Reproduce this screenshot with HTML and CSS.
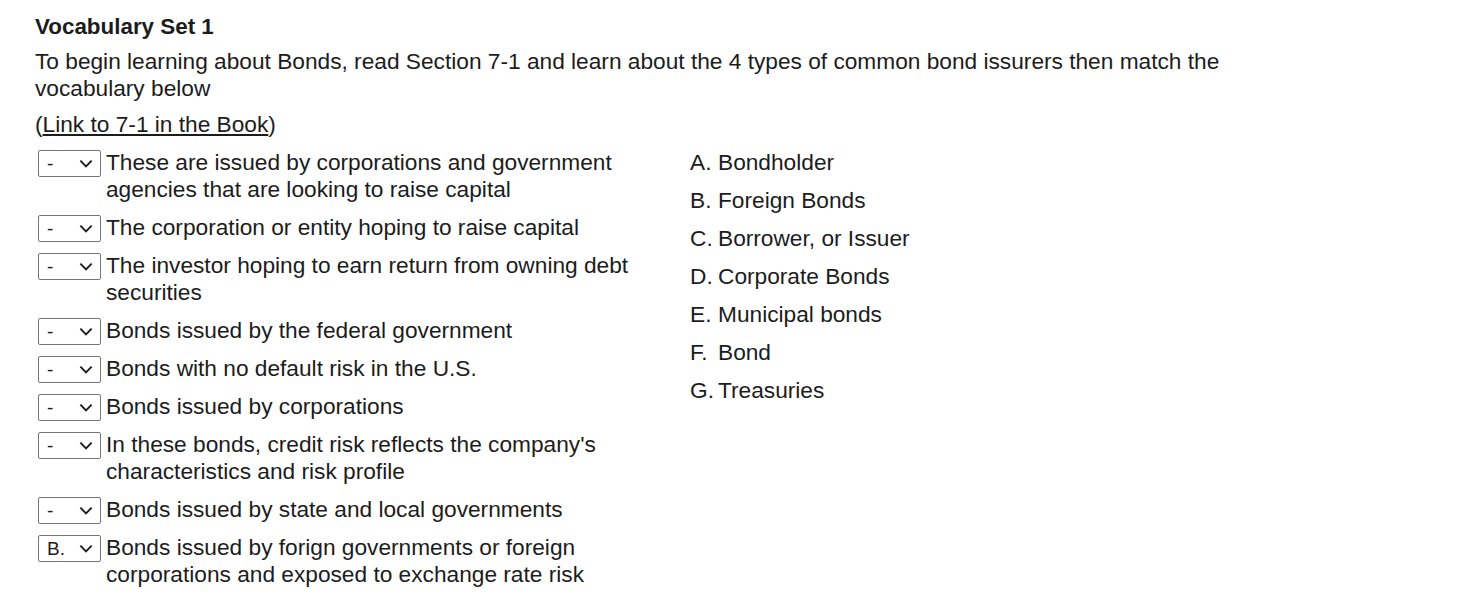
FILE: index.html
```html
<!DOCTYPE html>
<html>
<head>
<meta charset="utf-8">
<link rel="stylesheet" href="styles.css">
</head>
<body>
<div class="page">
  <h2 class="title">Vocabulary Set 1</h2>
  <p class="intro">To begin learning about Bonds, read Section 7-1 and learn about the 4 types of common bond issurers then match the vocabulary below</p>
  <p class="linkline">(<a href="#" class="link">Link to 7-1 in the Book</a>)</p>
  <div class="match">
    <div class="questions">
      <div class="row"><span class="sel"><select><option>-</option></select><svg class="chev" viewBox="0 0 12 8"><path d="M1 1.5 L6 6.5 L11 1.5" /></svg></span><span class="q">These are issued by corporations and government agencies that are looking to raise capital</span></div>
      <div class="row"><span class="sel"><select><option>-</option></select><svg class="chev" viewBox="0 0 12 8"><path d="M1 1.5 L6 6.5 L11 1.5" /></svg></span><span class="q">The corporation or entity hoping to raise capital</span></div>
      <div class="row"><span class="sel"><select><option>-</option></select><svg class="chev" viewBox="0 0 12 8"><path d="M1 1.5 L6 6.5 L11 1.5" /></svg></span><span class="q">The investor hoping to earn return from owning debt securities</span></div>
      <div class="row"><span class="sel"><select><option>-</option></select><svg class="chev" viewBox="0 0 12 8"><path d="M1 1.5 L6 6.5 L11 1.5" /></svg></span><span class="q">Bonds issued by the federal government</span></div>
      <div class="row"><span class="sel"><select><option>-</option></select><svg class="chev" viewBox="0 0 12 8"><path d="M1 1.5 L6 6.5 L11 1.5" /></svg></span><span class="q">Bonds with no default risk in the U.S.</span></div>
      <div class="row"><span class="sel"><select><option>-</option></select><svg class="chev" viewBox="0 0 12 8"><path d="M1 1.5 L6 6.5 L11 1.5" /></svg></span><span class="q">Bonds issued by corporations</span></div>
      <div class="row"><span class="sel"><select><option>-</option></select><svg class="chev" viewBox="0 0 12 8"><path d="M1 1.5 L6 6.5 L11 1.5" /></svg></span><span class="q">In these bonds, credit risk reflects the company's characteristics and risk profile</span></div>
      <div class="row"><span class="sel"><select><option>-</option></select><svg class="chev" viewBox="0 0 12 8"><path d="M1 1.5 L6 6.5 L11 1.5" /></svg></span><span class="q">Bonds issued by state and local governments</span></div>
      <div class="row"><span class="sel"><select><option>B.</option></select><svg class="chev" viewBox="0 0 12 8"><path d="M1 1.5 L6 6.5 L11 1.5" /></svg></span><span class="q">Bonds issued by forign governments or foreign corporations and exposed to exchange rate risk</span></div>
    </div>
    <ol class="answers">
      <li><span class="letter">A.</span>Bondholder</li>
      <li><span class="letter">B.</span>Foreign Bonds</li>
      <li><span class="letter">C.</span>Borrower, or Issuer</li>
      <li><span class="letter">D.</span>Corporate Bonds</li>
      <li><span class="letter">E.</span>Municipal bonds</li>
      <li><span class="letter">F.</span>Bond</li>
      <li><span class="letter">G.</span>Treasuries</li>
    </ol>
  </div>
</div>
</body>
</html>
```

FILE: styles.css
```css
html, body {
  margin: 0;
  padding: 0;
  background: #ffffff;
}
body {
  font-family: "Liberation Sans", Arial, sans-serif;
  color: #1c1c1c;
  font-size: 22.7px;
}
.page {
  padding: 13px 0 0 35px;
  width: 1250px;
}
.title {
  margin: 0 0 8px 0;
  font-size: 22.4px;
  line-height: 27px;
  font-weight: bold;
}
.intro {
  margin: 0 0 9px 0;
  line-height: 27px;
}
.linkline {
  margin: 0 0 11px 0;
  line-height: 27px;
}
.link {
  color: #1c1c1c;
  text-decoration: underline;
}
.match {
  display: flex;
  align-items: flex-start;
}
.questions {
  width: 611px;
  flex: none;
  display: flex;
  flex-direction: column;
  gap: 11px;
}
.row {
  display: flex;
  align-items: flex-start;
  line-height: 27px;
}
.sel {
  position: relative;
  flex: none;
  margin: 0 5px 0 3px;
  width: 63px;
  height: 27px;
}
.sel select {
  appearance: none;
  -webkit-appearance: none;
  width: 63px;
  height: 27px;
  box-sizing: border-box;
  border: 1px solid #767676;
  border-radius: 2px;
  background: #fff;
  font-family: "Liberation Sans", Arial, sans-serif;
  font-size: 19px;
  color: #1c1c1c;
  padding: 0 0 0 8px;
  margin: 0;
}
.chev {
  position: absolute;
  left: 41px;
  top: 10px;
  width: 14px;
  height: 9px;
  fill: none;
  stroke: #1c1c1c;
  stroke-width: 1.7;
  pointer-events: none;
}
.q {
  flex: 1;
}
.answers {
  list-style: none;
  margin: 0 0 0 44px;
  padding: 0;
  display: flex;
  flex-direction: column;
  gap: 11px;
}
.answers li {
  line-height: 27px;
}
.letter {
  display: inline-block;
  width: 28px;
}
```
